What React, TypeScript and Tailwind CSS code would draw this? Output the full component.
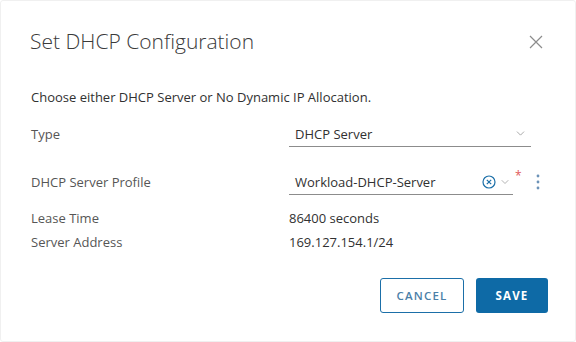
import { ChevronDown } from "lucide-react";

function Row({ label, children, className = "" }: { label: string; children: React.ReactNode; className?: string }) {
  return (
    <div className={`flex items-center text-[13px] leading-[18px] ${className}`}>
      <div className="w-[258px] text-[#565656]">{label}</div>
      <div className="flex-1">{children}</div>
    </div>
  );
}

export default function App() {
  return (
    <div className="w-[576px] h-[342px] bg-white font-['Open_Sans',sans-serif] text-[#313131] border border-[#f0f0f0] rounded-[3px]">
      <div className="flex items-center justify-between pl-[29px] pr-[32px] pt-[25px]">
        <h1 className="text-[21px] font-light leading-[30px] text-[#3a3a3a]">Set DHCP Configuration</h1>
        <svg width="14" height="14" viewBox="0 0 14 14" className="text-[#8c8c8c] mt-[2px]">
          <path d="M1 1l12 12M13 1L1 13" stroke="currentColor" strokeWidth="1.2" fill="none" />
        </svg>
      </div>

      <div className="px-[30px] mt-[32px]">
        <p className="text-[13px] leading-[18px] text-[#313131]">Choose either DHCP Server or No Dynamic IP Allocation.</p>

        <Row label="Type" className="mt-[15px]">
          <div className="flex items-center justify-between w-[242px] h-[26px] border-b border-[#8c8c8c] pl-[6px] pr-[4px]">
            <span className="text-[#313131]">DHCP Server</span>
            <ChevronDown size={13} strokeWidth={1.4} className="text-[#8f8f8f]" />
          </div>
        </Row>

        <Row label="DHCP Server Profile" className="mt-[22px]">
          <div className="flex items-center">
            <div className="flex items-center justify-between w-[224px] h-[26px] border-b border-[#8c8c8c] pl-[6px] pr-[2px]">
              <span className="text-[#313131]">Workload-DHCP-Server</span>
              <div className="flex items-center gap-[3px]">
                <svg width="14" height="14" viewBox="0 0 14 14" className="text-[#1b6fa8]">
                  <circle cx="7" cy="7" r="6" fill="none" stroke="currentColor" strokeWidth="1.2" />
                  <path d="M4.8 4.8l4.4 4.4M9.2 4.8l-4.4 4.4" stroke="currentColor" strokeWidth="1.2" />
                </svg>
                <ChevronDown size={12} strokeWidth={1.5} className="text-[#9a9a9a]" />
              </div>
            </div>
            <span className="ml-[2px] -mt-[13px] text-[12px] leading-none text-[#e05a5a]">*</span>
            <svg width="6" height="18" viewBox="0 0 6 18" className="ml-[13px] text-[#6c93b8]">
              <circle cx="3" cy="3" r="1.4" fill="currentColor" />
              <circle cx="3" cy="9" r="1.4" fill="currentColor" />
              <circle cx="3" cy="15" r="1.4" fill="currentColor" />
            </svg>
          </div>
        </Row>

        <Row label="Lease Time" className="mt-[14px]">
          <span className="text-[#313131]">86400 seconds</span>
        </Row>
        <Row label="Server Address" className="mt-[6px]">
          <span className="text-[#313131]">169.127.154.1/24</span>
        </Row>

        <div className="flex justify-end gap-[12px] mt-[27px] mr-[-3px]">
          <button className="w-[84px] h-[35px] rounded-[3px] border border-[#1b6fa8] bg-white text-[11.5px] font-semibold tracking-[1.2px] text-[#4b7fa8]">
            CANCEL
          </button>
          <button className="w-[72px] h-[35px] rounded-[3px] bg-[#0e6aa6] text-[11.5px] font-bold tracking-[1.2px] text-white">
            SAVE
          </button>
        </div>
      </div>
    </div>
  );
}
